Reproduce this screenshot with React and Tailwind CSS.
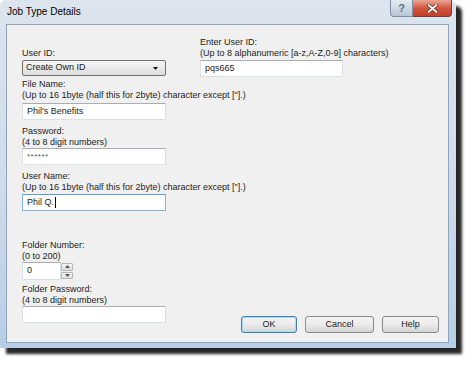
import React from 'react';

// Win7 style text field
function TextBox({ width = 'w-[144px]', focused = false, children }) {
  return (
    <div
      className={`${width} h-[17px] bg-white border flex items-center pl-[4px] ${
        focused
          ? 'border-[#7eb4ea] border-t-[#569de5]'
          : 'border-[#dbdfe6] border-t-[#abadb3]'
      }`}
    >
      {children}
    </div>
  );
}

function Line({ children }) {
  return <div className="h-[11px] leading-[11px] whitespace-nowrap">{children}</div>;
}

function Button({ children, width, primary = false }) {
  return (
    <div
      className={`${width} h-[17px] rounded-[3px] border flex items-center justify-center bg-gradient-to-b from-[#f4f4f4] via-[#ebebeb] to-[#d4d4d4] ${
        primary ? 'border-[#3c7fb1] shadow-[inset_0_0_0_1px_#a9dcf6]' : 'border-[#8a8a8a]'
      }`}
    >
      {children}
    </div>
  );
}

export default function App() {
  return (
    <div className="w-[474px] h-[367px] bg-white overflow-hidden font-['Liberation_Sans',Arial,sans-serif] text-[9px] text-[#1c1c1c]">
      {/* Fenêtre */}
      <div className="w-[456px] h-[348px] flex flex-col rounded-t-[6px] bg-gradient-to-b from-[#dce5ee] via-[#cfdcea] to-[#b7cee7] shadow-[6px_6px_3px_rgba(0,0,0,0.85)]">
        {/* Barre de titre */}
        <div className="h-[24px] flex items-start">
          <div className="pl-[7px] pt-[6px] text-[10px] leading-[12px] text-black">Job Type Details</div>
          <div className="ml-auto mr-[4px] flex">
            <div className="w-[23px] h-[17px] rounded-bl-[4px] border border-t-0 border-[#7d8ea3] bg-gradient-to-b from-[#e4ebf2] to-[#b7c6d6] flex items-center justify-center text-[11px] leading-[11px] text-[#5b6f87] font-bold">
              ?
            </div>
            <div className="w-[39px] h-[17px] rounded-br-[4px] border border-t-0 border-l-0 border-[#7a3a30] bg-gradient-to-b from-[#e8a798] via-[#d3563f] to-[#c1402a] flex items-center justify-center">
              <svg width="11" height="9" viewBox="0 0 11 9">
                <path d="M1.5 1 L9.5 8 M9.5 1 L1.5 8" stroke="#4a2a25" strokeWidth="3.2" strokeLinecap="round" />
                <path d="M1.5 1 L9.5 8 M9.5 1 L1.5 8" stroke="#ffffff" strokeWidth="1.8" strokeLinecap="round" />
              </svg>
            </div>
          </div>
        </div>

        {/* Zone client */}
        <div className="flex-1 ml-[6px] mr-[7px] mb-[5px] border border-[#8ea4bb] bg-[#f0f0f0] flex">
          {/* Colonne gauche */}
          <div className="pl-[15px] pt-[23px] w-[174px] flex flex-col">
            <Line>User ID:</Line>
            <div className="mt-[1px] w-[144px] h-[16px] rounded-[2px] border border-[#707070] bg-gradient-to-b from-[#f6f6f6] to-[#dcdcdc] flex items-center pl-[3px] pr-[7px]">
              <span className="flex-1">Create Own ID</span>
              <svg width="5" height="3" viewBox="0 0 5 3">
                <path d="M0 0 H5 L2.5 3 Z" fill="#111" />
              </svg>
            </div>

            <div className="mt-[3px]">
              <Line>File Name:</Line>
              <Line>(Up to 16 1byte (half this for 2byte) character except ["].)</Line>
            </div>
            <div className="mt-[2px]">
              <TextBox>Phil's Benefits</TextBox>
            </div>

            <div className="mt-[6px]">
              <Line>Password:</Line>
              <Line>(4 to 8 digit numbers)</Line>
            </div>
            <TextBox>
              <span className="text-[8px] tracking-[0.5px] text-[#555]">******</span>
            </TextBox>

            <div className="mt-[6px]">
              <Line>User Name:</Line>
              <Line>(Up to 16 1byte (half this for 2byte) character except ["].)</Line>
            </div>
            <div className="mt-[1px]">
              <TextBox focused>
                <span>Phil Q.</span>
                <span className="ml-[1px] w-[1px] h-[11px] bg-black" />
              </TextBox>
            </div>

            <div className="mt-[29px]">
              <Line>Folder Number:</Line>
              <Line>(0 to 200)</Line>
            </div>
            <div className="flex w-[51px] h-[18px]">
              <div className="flex-1 bg-white border border-[#dbdfe6] border-t-[#abadb3] pl-[4px] flex items-center">0</div>
              <div className="w-[12px] flex flex-col gap-[1px] py-[1px]">
                <div className="flex-1 border border-[#b5b5b5] rounded-[1px] bg-gradient-to-b from-[#f5f5f5] to-[#dedede] flex items-center justify-center">
                  <svg width="5" height="3" viewBox="0 0 5 3"><path d="M0 3 H5 L2.5 0 Z" fill="#555" /></svg>
                </div>
                <div className="flex-1 border border-[#b5b5b5] rounded-[1px] bg-gradient-to-b from-[#f5f5f5] to-[#dedede] flex items-center justify-center">
                  <svg width="5" height="3" viewBox="0 0 5 3"><path d="M0 0 H5 L2.5 3 Z" fill="#555" /></svg>
                </div>
              </div>
            </div>

            <div className="mt-[4px]">
              <Line>Folder Password:</Line>
              <Line>(4 to 8 digit numbers)</Line>
            </div>
            <TextBox />
          </div>

          {/* Colonne droite */}
          <div className="flex-1 pl-[19px] pr-[9px] pt-[12px] pb-[9px] flex flex-col">
            <Line>Enter User ID:</Line>
            <Line>(Up to 8 alphanumeric [a-z,A-Z,0-9] characters)</Line>
            <div className="mt-[1px]">
              <TextBox width="w-[143px]">pqs665</TextBox>
            </div>

            <div className="mt-auto flex justify-end gap-[8px]">
              <Button width="w-[56px]" primary>OK</Button>
              <Button width="w-[69px]">Cancel</Button>
              <Button width="w-[57px]">Help</Button>
            </div>
          </div>
        </div>
      </div>
    </div>
  );
}
